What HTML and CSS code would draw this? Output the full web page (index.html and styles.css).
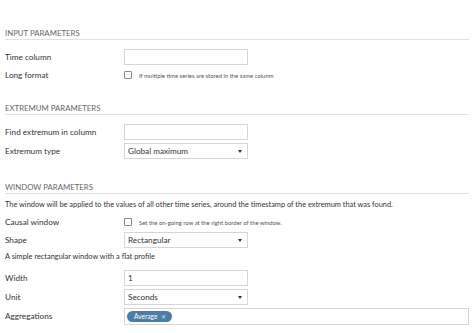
FILE: index.html
```html
<!DOCTYPE html>
<html>
<head>
<meta charset="utf-8">
<link rel="stylesheet" href="styles.css">
</head>
<body>
<div class="page">
  <section class="section first">
    <h2 class="section-title">INPUT PARAMETERS</h2>
    <div class="row">
      <label class="label">Time column</label>
      <div class="input"></div>
    </div>
    <div class="row check-row">
      <label class="label">Long format</label>
      <span class="checkbox"></span>
      <span class="help">If multiple time series are stored in the same column</span>
    </div>
  </section>

  <section class="section">
    <h2 class="section-title">EXTREMUM PARAMETERS</h2>
    <div class="row">
      <label class="label">Find extremum in column</label>
      <div class="input"></div>
    </div>
    <div class="row">
      <label class="label">Extremum type</label>
      <div class="input select"><span>Global maximum</span><span class="caret"></span></div>
    </div>
  </section>

  <section class="section window">
    <h2 class="section-title">WINDOW PARAMETERS</h2>
    <p class="desc">The window will be applied to the values of all other time series, around the timestamp of the extremum that was found.</p>
    <div class="row check-row">
      <label class="label">Causal window</label>
      <span class="checkbox"></span>
      <span class="help">Set the on-going row at the right border of the window.</span>
    </div>
    <div class="row">
      <label class="label">Shape</label>
      <div class="input select"><span>Rectangular</span><span class="caret"></span></div>
    </div>
    <p class="desc hint">A simple rectangular window with a flat profile</p>
    <div class="row">
      <label class="label">Width</label>
      <div class="input"><span>1</span></div>
    </div>
    <div class="row">
      <label class="label">Unit</label>
      <div class="input select"><span>Seconds</span><span class="caret"></span></div>
    </div>
    <div class="row">
      <label class="label">Aggregations</label>
      <div class="input multi"><span class="tag">Average <span class="x">✕</span></span></div>
    </div>
  </section>
</div>
</body>
</html>
```
FILE: styles.css
```css
html, body {
  margin: 0;
  padding: 0;
  background: #ffffff;
}
body {
  font-family: "Lato", "Liberation Sans", sans-serif;
  font-size: 8.2px;
  color: #333333;
}
.page {
  padding: 27px 5px 0 5px;
}
.section {
  margin-top: 20px;
}
.section.first {
  margin-top: 0;
}
.section.window {
  margin-top: 22px;
}
.section-title {
  margin: 0;
  font-weight: normal;
  font-size: 7.8px;
  line-height: 12px;
  color: #666666;
  border-bottom: 1px solid #e0e0e0;
}
.section-title + .row {
  margin-top: 9px;
}
.row {
  display: flex;
  align-items: center;
  height: 16px;
  margin-bottom: 3px;
}
.check-row {
  height: 14px;
}
.label {
  width: 119px;
  flex: none;
  color: #333333;
}
.input {
  box-sizing: border-box;
  width: 124px;
  height: 16px;
  border: 1px solid #d6d6d6;
  background: #fff;
  display: flex;
  align-items: center;
  padding: 0 3px;
  font-size: 8.2px;
  color: #333;
}
.select {
  justify-content: space-between;
  padding-right: 5px;
}
.caret {
  width: 0;
  height: 0;
  border-left: 2.5px solid transparent;
  border-right: 2.5px solid transparent;
  border-top: 3px solid #333;
}
.multi {
  flex: 1;
  height: 17px;
  padding: 0 2px;
}
.tag {
  display: inline-flex;
  align-items: center;
  height: 11px;
  padding: 0 6px 0 7px;
  border-radius: 6px;
  background: #4d7ca6;
  color: #fff;
  font-size: 6.6px;
}
.x {
  margin-left: 4px;
  font-size: 6px;
  color: #cfe0ef;
}
.checkbox {
  box-sizing: border-box;
  width: 8px;
  height: 8px;
  border: 1px solid #888;
  border-radius: 1px;
  margin-right: 7px;
}
.help {
  font-size: 5.9px;
  color: #555;
}
.desc {
  margin: 5px 0 4px 0;
  font-size: 7.4px;
  line-height: 12px;
  color: #333;
}
.desc.hint {
  margin-top: 3px;
  margin-bottom: 7px;
}
```
